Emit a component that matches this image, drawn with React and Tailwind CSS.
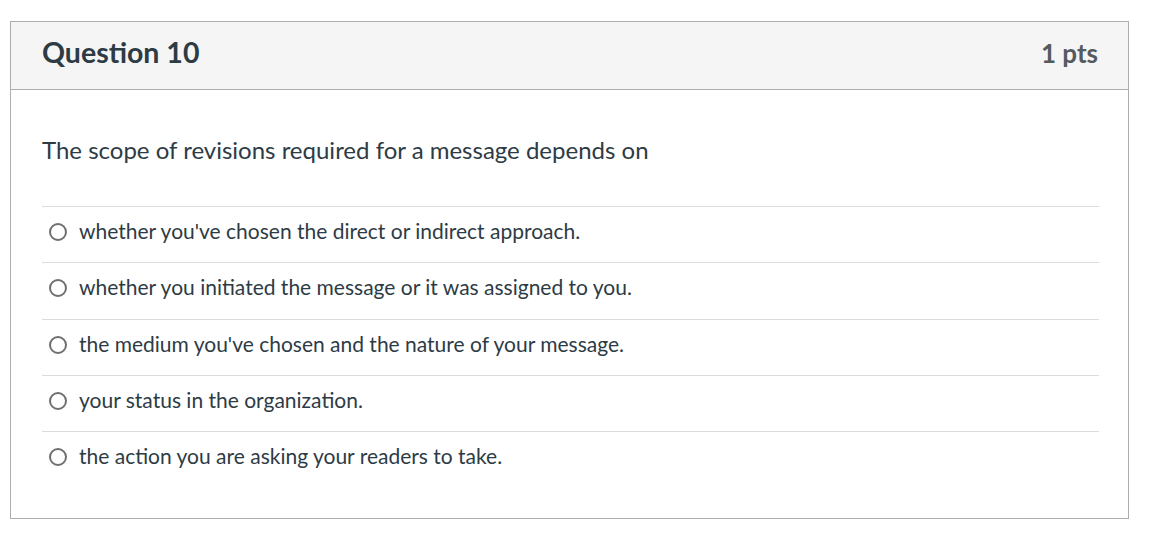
import React from "react";

const answers = [
  "whether you've chosen the direct or indirect approach.",
  "whether you initiated the message or it was assigned to you.",
  "the medium you've chosen and the nature of your message.",
  "your status in the organization.",
  "the action you are asking your readers to take.",
];

export default function App() {
  return (
    <div className="w-[1158px] h-[544px] bg-white pt-[21px] pl-[10px]" style={{ fontFamily: "Lato, 'Noto Sans', sans-serif" }}>
      <div className="w-[1119px] border border-[#adadad] bg-white">
        <div className="h-[68px] bg-[#f5f5f5] border-b border-[#adadad] flex items-center justify-between pl-[31px] pr-[30px] pb-[6px]">
          <h2 className="text-[28.5px] font-bold text-[#2d3b45] leading-none">Question 10</h2>
          <div className="text-[26px] font-bold text-[#555a5f] leading-none">1 pts</div>
        </div>
        <div className="pl-[31px] pr-[29px] pt-[45px] pb-[31px]">
          <p className="text-[24px] text-[#2d3b45] leading-[30px]">The scope of revisions required for a message depends on</p>
          <div className="mt-[41px]">
            {answers.map((a, i) => (
              <div key={i} className="h-[56.3px] border-t border-[#dcdcdc] flex items-center pl-[7px] gap-[12px] pb-[8px]">
                <span className="w-[18px] h-[18px] rounded-full border-2 border-[#707070] shrink-0 bg-white mt-[3px]" />
                <span className="text-[21px] text-[#2d3b45] leading-none">{a}</span>
              </div>
            ))}
          </div>
        </div>
      </div>
    </div>
  );
}
